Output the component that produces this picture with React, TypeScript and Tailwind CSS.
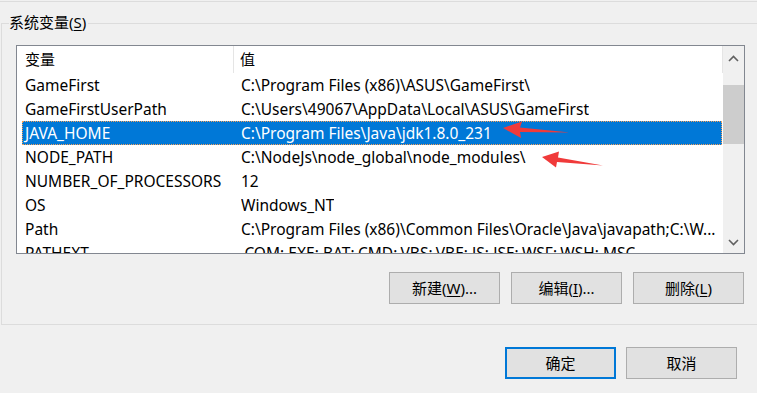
import React from "react";

const FONT = {
  fontFamily: '"Segoe UI", "Noto Sans", "Noto Sans CJK SC", sans-serif',
};

const rows: [string, string][] = [
  ["GameFirst", "C:\\Program Files (x86)\\ASUS\\GameFirst\\"],
  ["GameFirstUserPath", "C:\\Users\\49067\\AppData\\Local\\ASUS\\GameFirst"],
  ["JAVA_HOME", "C:\\Program Files\\Java\\jdk1.8.0_231"],
  ["NODE_PATH", "C:\\NodeJs\\node_global\\node_modules\\"],
  ["NUMBER_OF_PROCESSORS", "12"],
  ["OS", "Windows_NT"],
  ["Path", "C:\\Program Files (x86)\\Common Files\\Oracle\\Java\\javapath;C:\\W..."],
  ["PATHEXT", ".COM;.EXE;.BAT;.CMD;.VBS;.VBE;.JS;.JSE;.WSF;.WSH;.MSC"],
];

function Btn({
  children,
  primary,
}: {
  children: React.ReactNode;
  primary?: boolean;
}) {
  return (
    <div
      className={
        "flex h-[32px] w-[111px] items-center justify-center bg-[#e1e1e1] text-[15px] text-[#000] " +
        (primary ? "border-2 border-[#0078d7]" : "border border-[#adadad]")
      }
    >
      {children}
    </div>
  );
}

export default function App() {
  return (
    <div
      className="relative h-[393px] w-[757px] overflow-hidden bg-[#f0f0f0]"
      style={FONT}
    >
      <div className="mt-px h-px w-full bg-[#dcdcdc]" />
      {/* group box */}
      <div className="relative ml-px mt-[21px] h-[302px] w-[800px] border-b border-l border-t border-[#dcdcdc]">
        <div className="absolute left-[7px] top-[-13px] bg-[#f0f0f0] pr-[2px] text-[15px] leading-[22px] text-[#000]">
          系统变量(<span className="underline underline-offset-2">S</span>)
        </div>
        <div className="w-[742px] pl-[14px] pt-[21px]">
          {/* list box */}
          <div className="flex h-[209px] w-[729px] border border-[#828790] bg-white">
            <div className="flex w-[706px] flex-col overflow-hidden">
              {/* header */}
              <div className="flex h-[27px] shrink-0 items-center text-[15px] text-[#000]">
                <div className="flex h-full w-[217px] items-center border-r border-[#e5e5e5] pl-[8px]">
                  变量
                </div>
                <div className="flex h-full flex-1 items-center border-r border-[#e5e5e5] pl-[6px]">
                  值
                </div>
              </div>
              {rows.map(([k, v], i) => {
                const sel = i === 2;
                return (
                  <div key={k} className="h-[24px] shrink-0 pl-[5px]">
                    <div
                      className={
                        "flex h-[24px] w-[700px] items-center whitespace-nowrap pt-[2px] text-[15.5px] " +
                        (sel
                          ? "border border-dotted border-[#f5a15a] bg-[#0078d7] text-white"
                          : "border border-transparent text-[#000]")
                      }
                    >
                      <div className="w-[218px] shrink-0 pl-[2px]">{k}</div>
                      <div className="overflow-hidden">{v}</div>
                    </div>
                  </div>
                );
              })}
            </div>
            {/* scrollbar */}
            <div className="flex w-[21px] flex-col bg-[#f0f0f0]">
              <div className="flex h-[24px] items-center justify-center">
                <svg width="11" height="7" viewBox="0 0 11 7">
                  <path d="M1 6 L5.5 1.5 L10 6" fill="none" stroke="#606060" strokeWidth="1.6" />
                </svg>
              </div>
              <div className="mt-[15px] h-[59px] bg-[#cdcdcd]" />
              <div className="flex-1" />
              <div className="flex h-[22px] items-center justify-center">
                <svg width="11" height="7" viewBox="0 0 11 7">
                  <path d="M1 1 L5.5 5.5 L10 1" fill="none" stroke="#606060" strokeWidth="1.6" />
                </svg>
              </div>
            </div>
          </div>
          {/* buttons */}
          <div className="mt-[18px] flex justify-end gap-[11px]">
            <Btn>
              新建(<span className="underline underline-offset-2">W</span>)...
            </Btn>
            <Btn>
              编辑(<span className="underline underline-offset-2">I</span>)...
            </Btn>
            <Btn>
              删除(<span className="underline underline-offset-2">L</span>)
            </Btn>
          </div>
        </div>
      </div>
      {/* bottom buttons */}
      <div className="mt-[22px] flex w-[737px] justify-end gap-[10px]">
        <Btn primary>确定</Btn>
        <Btn>取消</Btn>
      </div>
      {/* red annotation arrows */}
      <svg
        className="pointer-events-none absolute left-0 top-0"
        width="757"
        height="393"
        viewBox="0 0 757 393"
      >
        <path
          d="M503 128 L522 121.5 L520 127.5 L570 132.5 L520 132 L521 138 Z"
          fill="#f03a3a"
        />
        <path
          d="M542 157 L559 151.5 L558 157.5 L603 165.5 L557 162 L556 167.5 Z"
          fill="#f03a3a"
        />
      </svg>
    </div>
  );
}
